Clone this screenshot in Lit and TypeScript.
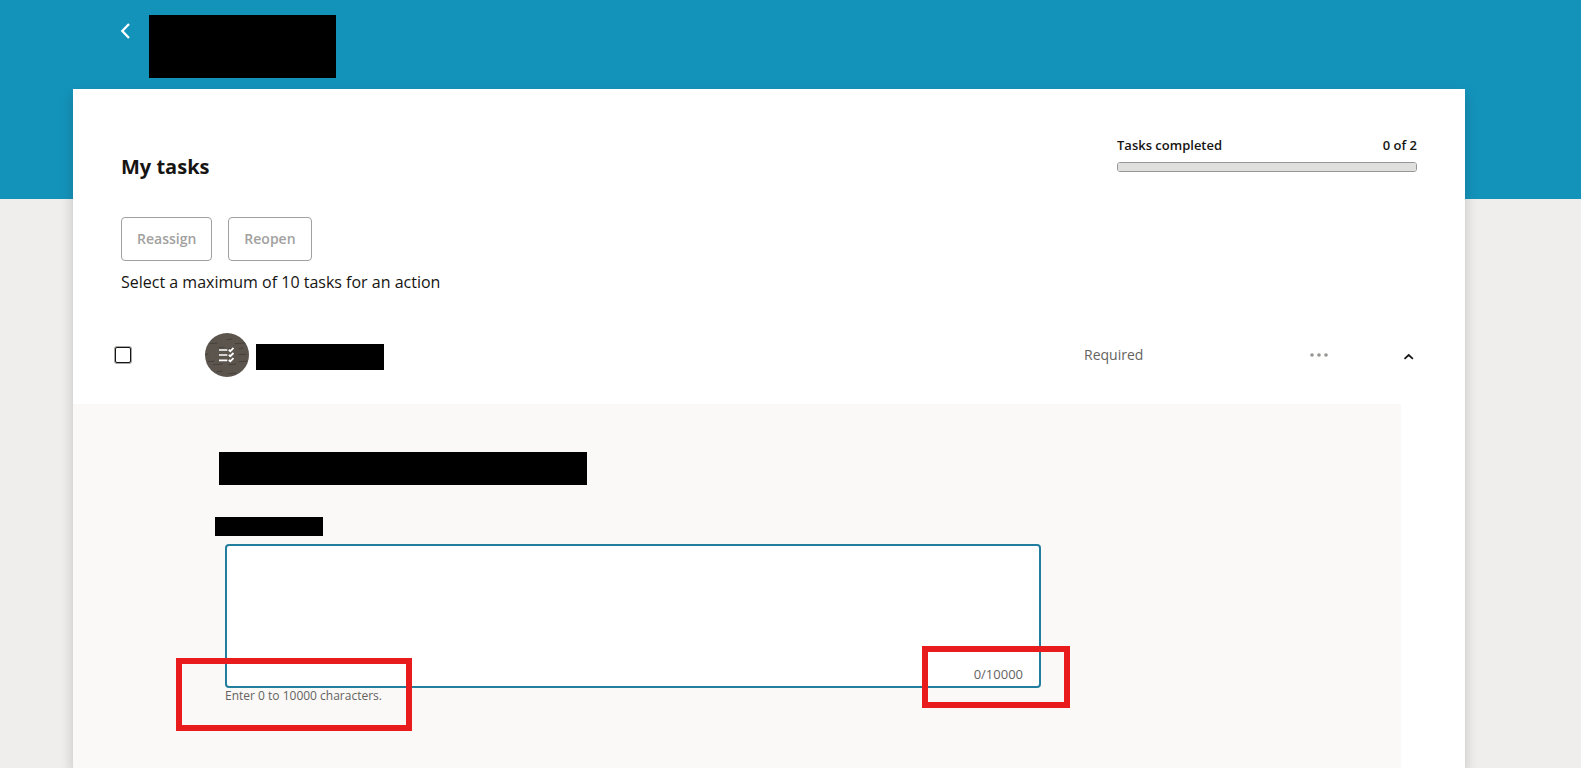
import { LitElement, html, css, svg } from "lit";
import { customElement, state } from "lit/decorators.js";

@customElement("task-avatar")
class TaskAvatar extends LitElement {
  static styles = css`
    :host { display: block; width: 44px; height: 44px; }
    svg { display: block; }
  `;

  render() {
    const dashes = [
      [22, 6, 5], [5, 10, 7], [30, 10, 10], [14, 14, 5], [24, 15, 5], [34, 15, 4],
      [0, 21, 3], [34, 21, 7], [3, 28, 6], [34, 28, 8], [8, 31, 9], [24, 31, 7],
      [12, 38, 5], [24, 40, 7],
    ];
    return html`
      <svg width="44" height="44" viewBox="0 0 44 44" aria-hidden="true">
        <clipPath id="disc"><circle cx="22" cy="22" r="22" /></clipPath>
        <g clip-path="url(#disc)">
          <rect width="44" height="44" fill="#5b554e" />
          ${dashes.map(([x, y, w]) => svg`<path d="M${x} ${y + 0.7}l${w} -0.6" stroke="#46413c" stroke-width="1" stroke-linecap="round" />`)}
        </g>
        <path d="M14 17h8.300M14 22h8.300M14 27.300h8.300" stroke="#fff" stroke-width="1.7" />
        <path d="M23.8 16.8l1.500 1.300 3.2 -3.200M23.8 21.900l1.500 1.300 3.2 -3.200M23.8 27l1.500 1.300 3.2 -3.200" fill="none" stroke="#fff" stroke-width="1.9" />
      </svg>
    `;
  }
}

@customElement("app-root")
class AppRoot extends LitElement {
  static styles = css`
    * { box-sizing: border-box; }
    :host {
      display: flex;
      flex-direction: column;
      height: 100vh;
      overflow: hidden;
      background: linear-gradient(#1493ba 199px, #efeeec 199px);
      font-family: "Open Sans", "Noto Sans", sans-serif;
      font-size: 14px;
      line-height: 20px;
      color: #161513;
    }
    button { font: inherit; cursor: pointer; }
    .header { display: flex; align-items: flex-start; gap: 18px; padding: 15px 117px 11px; }
    .icon-button { display: flex; align-items: center; justify-content: center; padding: 0; border: 0; background: none; }
    .back { width: 14px; height: 32px; }
    .redacted { background: #000; }
    .person { width: 187px; height: 63px; }
    .card {
      flex: 1 0 auto;
      margin: 0 116px 0 73px;
      background: #fff;
      box-shadow: 0 6px 12px rgba(22, 21, 19, 0.2);
    }
    .top { display: flex; justify-content: space-between; align-items: flex-start; padding: 46px 48px 0; }
    h1 { margin: 16px 0 0; font-size: 20px; line-height: 32px; font-weight: 700; }
    .progress { width: 300px; }
    .progress-text { display: flex; justify-content: space-between; font-size: 13px; font-weight: 600; }
    progress {
      appearance: none;
      display: block;
      width: 100%;
      height: 10px;
      margin-top: 7px;
      border: 1px solid #989795;
      border-radius: 3px;
      background: #dfdfdd;
      overflow: hidden;
    }
    progress::-webkit-progress-bar { background: #dfdfdd; }
    progress::-webkit-progress-value { background: #1493ba; }
    .actions { display: flex; gap: 16px; padding: 34px 48px 0; }
    .action {
      height: 44px;
      padding: 0 15px;
      border: 1px solid #a0a09f;
      border-radius: 4px;
      background: #fff;
      color: #a2a1a0;
      font-weight: 600;
    }
    .hint { margin: 9px 48px 0; font-size: 16px; line-height: 24px; }
    .task {
      display: grid;
      grid-template-columns: 90px 51px 1fr 223px 92px 20px;
      align-items: center;
      height: 98px;
      margin-top: 12px;
      padding: 0 46px 0 42px;
    }
    .tick {
      appearance: none;
      width: 16px;
      height: 16px;
      margin: 0;
      border: 1px solid #161513;
      border-radius: 2px;
      background: #fff;
      box-shadow: 0 0 0 1px #a8a7a5;
    }
    .task-name { width: 128px; height: 26px; margin-top: 3px; }
    .required { color: #65635f; }
    .more { width: 24px; height: 32px; }
    .toggle { width: 20px; height: 32px; }
    .panel { min-height: 364px; margin-right: 64px; padding: 48px 48px 48px 142px; background: #faf9f7; }
    .question { width: 368px; height: 33px; margin-left: 4px; }
    .label { display: block; width: 108px; height: 19px; margin-top: 32px; }
    .field { position: relative; max-width: 826px; margin-top: 8px; padding-left: 10px; }
    textarea {
      display: block;
      width: 100%;
      height: 144px;
      padding: 12px 16px;
      border: 2px solid #227e9e;
      border-radius: 4px;
      background: #fff;
      font: inherit;
      resize: none;
      outline: none;
    }
    .note { font-size: 12px; line-height: 16px; color: #65635f; }
    .counter { position: absolute; right: 18px; top: 122px; font-size: 13px; }
    .mark { position: absolute; border: 6px solid #e81c1c; pointer-events: none; }
    .mark-help { left: -39px; top: 114px; width: 236px; height: 73px; }
    .mark-count { right: -29px; top: 102px; width: 148px; height: 62px; }
  `;

  @state() private answer = "";

  private onInput(e: Event) {
    this.answer = (e.target as HTMLTextAreaElement).value;
  }

  render() {
    return html`
      <header class="header">
        <button class="icon-button back" aria-label="Back">
          <svg width="14" height="18" viewBox="0 0 14 18"><path d="M12 2L5.3 9l6.7 7" fill="none" stroke="#fff" stroke-width="2.3" /></svg>
        </button>
        <div class="redacted person"></div>
      </header>
      <main class="card">
        <div class="top">
          <h1>My tasks</h1>
          <div class="progress">
            <div class="progress-text">
              <label for="done">Tasks completed</label><span>0 of 2</span>
            </div>
            <progress id="done" value="0" max="2"></progress>
          </div>
        </div>
        <div class="actions">
          <button class="action" disabled>Reassign</button>
          <button class="action" disabled>Reopen</button>
        </div>
        <p class="hint">Select a maximum of 10 tasks for an action</p>
        <div class="task">
          <input class="tick" type="checkbox" aria-label="Select task" />
          <task-avatar></task-avatar>
          <div class="redacted task-name"></div>
          <span class="required">Required</span>
          <button class="icon-button more" aria-label="More actions">
            <svg width="24" height="8" viewBox="0 0 24 8" fill="#969593"><circle cx="5" cy="4" r="1.8" /><circle cx="12" cy="4" r="1.8" /><circle cx="19" cy="4" r="1.8" /></svg>
          </button>
          <button class="icon-button toggle" aria-label="Collapse task">
            <svg width="12" height="12" viewBox="0 0 12 12"><path d="M1.500 9.800L5.700 6l4.200 3.800" fill="none" stroke="#161513" stroke-width="1.7" /></svg>
          </button>
        </div>
        <section class="panel">
          <div class="redacted question"></div>
          <label class="redacted label" for="answer"></label>
          <div class="field">
            <textarea id="answer" maxlength="10000" aria-label="Answer" aria-describedby="help" @input=${this.onInput}></textarea>
            <span class="note counter">${this.answer.length}/10000</span>
            <div class="note" id="help">Enter 0 to 10000 characters.</div>
            <div class="mark mark-help"></div>
            <div class="mark mark-count"></div>
          </div>
        </section>
      </main>
    `;
  }
}
